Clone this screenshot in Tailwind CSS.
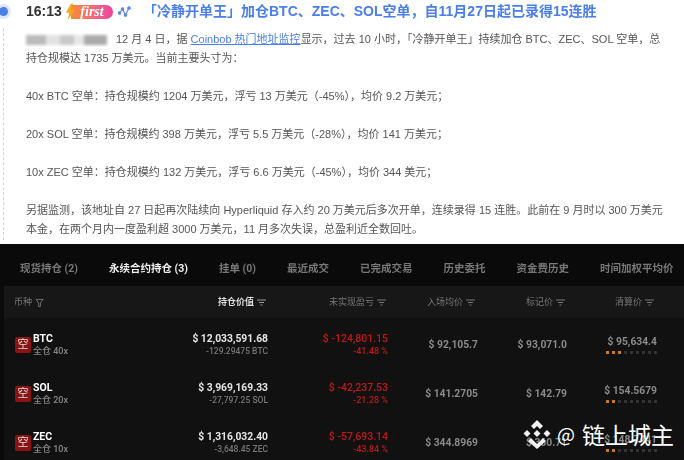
<!DOCTYPE html>
<html lang="zh">
<head>
    <meta charset="UTF-8" />
    <title>冷静开单王</title>
    <script src="https://cdn.jsdelivr.net/npm/@tailwindcss/browser@4"></script>
</head>
<body class="relative w-[684px] h-[460px] overflow-hidden bg-white font-['Liberation_Sans','Noto_Sans_CJK_SC',sans-serif]">

<!-- news item -->
<section class="relative h-[244px] pl-[26px] overflow-hidden blur-[0.3px]">
    <div class="absolute left-[3px] top-[28px] h-[212px] border-l border-dashed border-gray-300"></div>
    <div class="absolute left-[-1px] top-[7px] w-[9px] h-[9px] rounded-full bg-[#4a7ee8] ring-3 ring-[#dfe8fb]"></div>

    <div class="flex items-center h-[23px]">
        <span class="text-[14px] font-bold text-[#333] w-[36px]">16:13</span>
        <div class="relative flex items-center ml-[4px] w-[47px] h-[16px]">
            <div class="ml-[5px] w-[42px] h-[14px] rounded-r-full bg-gradient-to-r from-[#f58a2c] to-[#ef3fa0] text-white text-[14px] font-bold italic leading-[13px] text-center font-['Liberation_Serif',serif]">first</div>
            <svg class="absolute left-0 top-[-2px]" width="9" height="20" viewBox="0 0 11 20"><path d="M6 0 L0 11 L4 11 L2 20 L11 7 L6 7 L9 0 Z" fill="#f5a623"/></svg>
        </div>
        <svg class="ml-[5px]" width="13" height="12" viewBox="0 0 13 12" fill="none" stroke="#5b8ae6" stroke-width="1.1"><path d="M1.5 7 L4.5 3 L7.5 9 L11 2"/><circle cx="1.5" cy="7" r="1.3" fill="#5b8ae6"/><circle cx="4.5" cy="3" r="1.3" fill="#5b8ae6"/><circle cx="7.5" cy="9" r="1.3" fill="#5b8ae6"/><circle cx="11" cy="2" r="1.3" fill="#5b8ae6"/></svg>
        <h1 class="ml-[12px] text-[14px] font-bold text-[#4a7ee8] whitespace-nowrap">「冷静开单王」加仓BTC、ZEC、SOL空单，自11月27日起已录得15连胜</h1>
    </div>

    <div class="mt-[7px] w-[640px] text-[11px] leading-[19px] text-[#555]">
        <p class="whitespace-nowrap"><span class="inline-flex align-middle w-[81px] h-[10px] mr-[9px] blur-[1.5px]"><i class="w-[20px] bg-[#bbb]"></i><i class="w-[14px] bg-[#e2e2e2]"></i><i class="w-[14px] bg-[#c8c8c8]"></i><i class="w-[10px] bg-[#e6e6e6]"></i><i class="w-[23px] bg-[#aaa]"></i></span>12 月 4 日，据 <span class="text-[#4a7ee8] underline">Coinbob 热门地址监控</span>显示，过去 10 小时，「冷静开单王」持续加仓 BTC、ZEC、SOL 空单，总</p>
        <p>持仓规模达 1735 万美元。当前主要头寸为：</p>
        <p class="mt-[19px]">40x BTC 空单：持仓规模约 1204 万美元，浮亏 13 万美元（-45%），均价 9.2 万美元；</p>
        <p class="mt-[19px]">20x SOL 空单：持仓规模约 398 万美元，浮亏 5.5 万美元（-28%），均价 141 万美元；</p>
        <p class="mt-[19px]">10x ZEC 空单：持仓规模约 132 万美元，浮亏 6.6 万美元（-45%），均价 344 美元；</p>
        <p class="mt-[19px] whitespace-nowrap">另据监测，该地址自 27 日起再次陆续向 Hyperliquid 存入约 20 万美元后多次开单，连续录得 15 连胜。此前在 9 月时以 300 万美元</p>
        <p class="whitespace-nowrap">本金，在两个月内一度盈利超 3000 万美元，11 月多次失误，总盈利近全数回吐。</p>
    </div>
</section>

<!-- positions table -->
<section class="h-[216px] bg-[#0a0a0a] font-['Roboto','Noto_Sans_CJK_SC',sans-serif] blur-[0.3px]">
    <nav class="flex gap-[31px] pl-[20px] pt-[7px] h-[42px] items-center text-[10.5px] font-bold text-[#777] whitespace-nowrap">
        <span>现货持仓 (2)</span>
        <span class="text-[#eee]">永续合约持仓 (3)</span>
        <span>挂单 (0)</span>
        <span>最近成交</span>
        <span>已完成交易</span>
        <span>历史委托</span>
        <span>资金费历史</span>
        <span>时间加权平均价</span>
    </nav>

    <div class="ml-[4px] bg-[#111112] h-[174px]">
        <div class="grid grid-cols-[116px_148px_120px_90px_89px_90px] h-[32px] pt-[1px] items-center bg-[#171717] text-[9px] text-[#777]">
            <div class="flex items-center gap-[3px] pl-[10px]">币种
                <svg width="9" height="10" viewBox="0 0 10 10" fill="none" stroke="#777"><path d="M1 1 H9 L6 5 V9 L4 9 V5 Z"/></svg>
            </div>
            <div class="flex items-center justify-end gap-[3px] font-bold text-[#ddd] pr-[2px]">持仓价值
                <svg width="9" height="7" viewBox="0 0 9 7" stroke="#999"><path d="M0 1 H9 M2 3.5 H7 M3.5 6 H5.5"/></svg></div>
            <div class="flex items-center justify-end gap-[3px] pr-[2px]">未实现盈亏
                <svg width="9" height="7" viewBox="0 0 9 7" stroke="#777"><path d="M0 1 H9 M2 3.5 H7 M3.5 6 H5.5"/></svg></div>
            <div class="flex items-center justify-end gap-[3px] pr-[3px]">入场均价
                <svg width="9" height="7" viewBox="0 0 9 7" stroke="#777"><path d="M0 1 H9 M2 3.5 H7 M3.5 6 H5.5"/></svg></div>
            <div class="flex items-center justify-end gap-[3px] pr-[2px]">标记价
                <svg width="9" height="7" viewBox="0 0 9 7" stroke="#777"><path d="M0 1 H9 M2 3.5 H7 M3.5 6 H5.5"/></svg></div>
            <div class="flex items-center justify-end gap-[3px] pr-[3px]">清算价
                <svg width="9" height="7" viewBox="0 0 9 7" stroke="#777"><path d="M0 1 H9 M2 3.5 H7 M3.5 6 H5.5"/></svg></div>
        </div>

        <div class="grid grid-cols-[116px_148px_120px_90px_89px_90px] h-[49px] items-center mt-[2px]">
            <div class="flex items-center gap-[2px] pl-[11px]">
                <span class="w-[16px] h-[16px] rounded-[2px] bg-[#8a1414] text-[#ddd] text-[11px] leading-[16px] text-center">空</span>
                <div class="leading-[13px]"><div class="text-[10.5px] font-bold text-white">BTC</div><div class="text-[9px] font-medium text-[#888]">全仓 40x</div></div>
            </div>
            <div class="text-right leading-[13px]"><div class="text-[10.3px] font-bold text-[#e5e5e5]">$ 12,033,591.68</div><div class="text-[8.5px] font-medium text-[#777]">-129.29475 BTC</div></div>
            <div class="text-right leading-[13px]"><div class="text-[10.5px] font-medium text-[#c01818]">$ -124,801.15</div><div class="text-[9px] font-medium text-[#c01818]">-41.48 %</div></div>
            <div class="text-right text-[10.3px] font-bold text-[#8a8a8a]">$ 92,105.7</div>
            <div class="text-right text-[10.3px] font-bold text-[#8a8a8a]">$ 93,071.0</div>
            <div class="text-right leading-[13px]"><div class="text-[10.3px] font-bold text-[#8a8a8a]">$ 95,634.4</div>
                <div class="flex justify-end gap-[3px] mt-[3px]">
                    <i class="w-[3px] h-[3px] bg-[#c47a20]"></i><i class="w-[3px] h-[3px] bg-[#c47a20]"></i><i class="w-[3px] h-[3px] bg-[#c47a20]"></i><i class="w-[3px] h-[3px] bg-[#333]"></i><i class="w-[3px] h-[3px] bg-[#333]"></i><i class="w-[3px] h-[3px] bg-[#333]"></i><i class="w-[3px] h-[3px] bg-[#333]"></i><i class="w-[3px] h-[3px] bg-[#333]"></i><i class="w-[3px] h-[3px] bg-[#333]"></i>
                </div>
            </div>
        </div>

        <div class="grid grid-cols-[116px_148px_120px_90px_89px_90px] h-[49px] items-center">
            <div class="flex items-center gap-[2px] pl-[11px]">
                <span class="w-[16px] h-[16px] rounded-[2px] bg-[#8a1414] text-[#ddd] text-[11px] leading-[16px] text-center">空</span>
                <div class="leading-[13px]"><div class="text-[10.5px] font-bold text-white">SOL</div><div class="text-[9px] font-medium text-[#888]">全仓 20x</div></div>
            </div>
            <div class="text-right leading-[13px]"><div class="text-[10.3px] font-bold text-[#e5e5e5]">$ 3,969,169.33</div><div class="text-[8.5px] font-medium text-[#777]">-27,797.25 SOL</div></div>
            <div class="text-right leading-[13px]"><div class="text-[10.5px] font-medium text-[#c01818]">$ -42,237.53</div><div class="text-[9px] font-medium text-[#c01818]">-21.28 %</div></div>
            <div class="text-right text-[10.3px] font-bold text-[#8a8a8a]">$ 141.2705</div>
            <div class="text-right text-[10.3px] font-bold text-[#8a8a8a]">$ 142.79</div>
            <div class="text-right leading-[13px]"><div class="text-[10.3px] font-bold text-[#8a8a8a]">$ 154.5679</div>
                <div class="flex justify-end gap-[3px] mt-[3px]">
                    <i class="w-[3px] h-[3px] bg-[#c47a20]"></i><i class="w-[3px] h-[3px] bg-[#c47a20]"></i><i class="w-[3px] h-[3px] bg-[#333]"></i><i class="w-[3px] h-[3px] bg-[#333]"></i><i class="w-[3px] h-[3px] bg-[#333]"></i><i class="w-[3px] h-[3px] bg-[#333]"></i><i class="w-[3px] h-[3px] bg-[#333]"></i><i class="w-[3px] h-[3px] bg-[#333]"></i><i class="w-[3px] h-[3px] bg-[#333]"></i>
                </div>
            </div>
        </div>

        <div class="grid grid-cols-[116px_148px_120px_90px_89px_90px] h-[49px] items-center">
            <div class="flex items-center gap-[2px] pl-[11px]">
                <span class="w-[16px] h-[16px] rounded-[2px] bg-[#8a1414] text-[#ddd] text-[11px] leading-[16px] text-center">空</span>
                <div class="leading-[13px]"><div class="text-[10.5px] font-bold text-white">ZEC</div><div class="text-[9px] font-medium text-[#888]">全仓 10x</div></div>
            </div>
            <div class="text-right leading-[13px]"><div class="text-[10.3px] font-bold text-[#e5e5e5]">$ 1,316,032.40</div><div class="text-[8.5px] font-medium text-[#777]">-3,648.45 ZEC</div></div>
            <div class="text-right leading-[13px]"><div class="text-[10.5px] font-medium text-[#c01818]">$ -57,693.14</div><div class="text-[9px] font-medium text-[#c01818]">-43.84 %</div></div>
            <div class="text-right text-[10.3px] font-bold text-[#8a8a8a]">$ 344.8969</div>
            <div class="text-right text-[10.3px] font-bold text-[#8a8a8a]">$ 360.71</div>
            <div class="text-right leading-[13px]"><div class="text-[10.3px] font-bold text-[#8a8a8a]">$ 148.7441</div>
                <div class="flex justify-end gap-[3px] mt-[3px]">
                    <i class="w-[3px] h-[3px] bg-[#c47a20]"></i><i class="w-[3px] h-[3px] bg-[#c47a20]"></i><i class="w-[3px] h-[3px] bg-[#333]"></i><i class="w-[3px] h-[3px] bg-[#333]"></i><i class="w-[3px] h-[3px] bg-[#333]"></i><i class="w-[3px] h-[3px] bg-[#333]"></i><i class="w-[3px] h-[3px] bg-[#333]"></i><i class="w-[3px] h-[3px] bg-[#333]"></i><i class="w-[3px] h-[3px] bg-[#333]"></i>
                </div>
            </div>
        </div>
    </div>
</section>

<!-- watermark -->
<div class="absolute left-[523px] top-[419px] flex items-center text-white">
    <svg width="28" height="30" viewBox="0 0 28 30" fill="#f0f0f0"><path d="M14 1 L20 7 L17 10 L14 7 L11 10 L8 7 Z"/><path d="M4 11 L7.5 14.5 L4 18 L0.5 14.5 Z"/><path d="M24 11 L27.5 14.5 L24 18 L20.5 14.5 Z"/><path d="M14 11 L17.5 14.5 L14 18 L10.5 14.5 Z"/><path d="M8 19 L14 25 L20 19 L23 22 L14 30 L5 22 Z"/></svg>
    <span class="ml-[6px] text-[19px] leading-[30px] font-['Noto_Sans_CJK_SC',sans-serif]">@</span>
    <span class="ml-[7px] text-[23px] leading-[30px] font-['Noto_Sans_CJK_SC',sans-serif] whitespace-nowrap">链上城主</span>
</div>

</body>
</html>
